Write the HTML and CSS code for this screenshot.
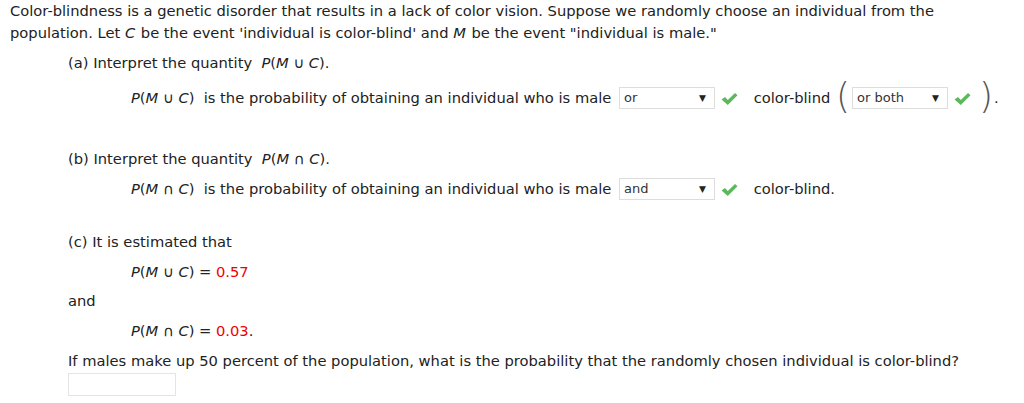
FILE: index.html
```html
<!DOCTYPE html>
<html lang="en">
<head>
    <meta charset="UTF-8">
    <title>Color-blindness</title>
    <link rel="stylesheet" href="styles.css">
</head>
<body>
    <p class="intro">Color-blindness is a genetic disorder that results in a lack of color vision. Suppose we randomly choose an individual from the population. Let <i>C</i> be the event 'individual is color-blind' and <i>M</i> be the event "individual is male."</p>

    <div class="part part-a">
        <p class="question">(a) Interpret the quantity &nbsp;<i>P</i>(<i>M</i> &cup; <i>C</i>).</p>
        <p class="answer">
            <i>P</i>(<i>M</i> &cup; <i>C</i>) &nbsp;is the probability of obtaining an individual who is male
            <span class="select"><span class="val">or</span><span class="arrow">&#9660;</span></span><svg class="check" viewBox="0 0 17 14"><path d="M0.5 7.5 L4 5 L6.8 8 L14 1 L16.5 3.2 L6.8 13 Z" fill="#5cb85c"/></svg>
            <span class="gap">color-blind</span>
            <span class="paren">(</span><span class="select"><span class="val">or both</span><span class="arrow">&#9660;</span></span><svg class="check" viewBox="0 0 17 14"><path d="M0.5 7.5 L4 5 L6.8 8 L14 1 L16.5 3.2 L6.8 13 Z" fill="#5cb85c"/></svg><span class="paren paren-close">)</span>.
        </p>
    </div>

    <div class="part part-b">
        <p class="question">(b) Interpret the quantity &nbsp;<i>P</i>(<i>M</i> &cap; <i>C</i>).</p>
        <p class="answer">
            <i>P</i>(<i>M</i> &cap; <i>C</i>) &nbsp;is the probability of obtaining an individual who is male
            <span class="select"><span class="val">and</span><span class="arrow">&#9660;</span></span><svg class="check" viewBox="0 0 17 14"><path d="M0.5 7.5 L4 5 L6.8 8 L14 1 L16.5 3.2 L6.8 13 Z" fill="#5cb85c"/></svg>
            <span class="gap">color-blind.</span>
        </p>
    </div>

    <div class="part part-c">
        <p class="question">(c) It is estimated that</p>
        <p class="answer"><i>P</i>(<i>M</i> &cup; <i>C</i>) = <span class="value">0.57</span></p>
        <p class="question">and</p>
        <p class="answer"><i>P</i>(<i>M</i> &cap; <i>C</i>) = <span class="value">0.03</span>.</p>
        <p class="question">If males make up 50 percent of the population, what is the probability that the randomly chosen individual is color-blind?</p>
        <div class="input"></div>
    </div>
</body>
</html>
```

FILE: styles.css
```css
* {
    margin: 0;
    padding: 0;
    box-sizing: border-box;
}

body {
    font-family: "DejaVu Sans", Verdana, sans-serif;
    font-size: 14.7px;
    line-height: 22px;
    color: #222;
    background: #fff;
    padding: 0 10px;
}

.intro {
    width: 960px;
}

.intro i {
    padding-right: 1px;
}

.part {
    padding-left: 58px;
}

.part-a {
    margin-top: 8px;
}

.answer {
    padding-left: 63px;
}

.part-a .answer {
    margin-top: 13px;
    height: 22px;
}

.part-b {
    margin-top: 39px;
}

.part-b .answer {
    margin-top: 8px;
}

.part-c {
    margin-top: 30px;
}

.part-c .answer,
.part-c .question {
    margin-top: 8px;
}

.part-c .question:first-child {
    margin-top: 0;
}

.part-c .question:nth-child(3) {
    margin-top: 7px;
}

.value {
    color: #e00;
}

.select {
    display: inline-flex;
    align-items: center;
    justify-content: space-between;
    width: 96px;
    height: 22px;
    border: 1px solid #ddd;
    padding: 0 8px 0 4px;
    font-size: 13px;
    color: #333;
    vertical-align: middle;
    margin-left: 3px;
    position: relative;
    top: -1px;
}

.paren + .select {
    margin-left: 1px;
}

.arrow {
    font-size: 9px;
    color: #222;
}

.check {
    width: 17px;
    height: 14px;
    vertical-align: middle;
    margin-left: 6px;
}

.gap {
    margin-left: 11px;
}

.paren {
    font-size: 36px;
    font-weight: 200;
    color: #555;
    vertical-align: middle;
    margin-left: 1px;
    margin-right: 1px;
    position: relative;
    top: -3px;
    line-height: 22px;
}

.paren-close {
    margin-left: 8px;
    margin-right: 1px;
}

.input {
    width: 108px;
    height: 23px;
    border: 1px solid #e4e4e4;
    margin-top: 1px;
}
```
